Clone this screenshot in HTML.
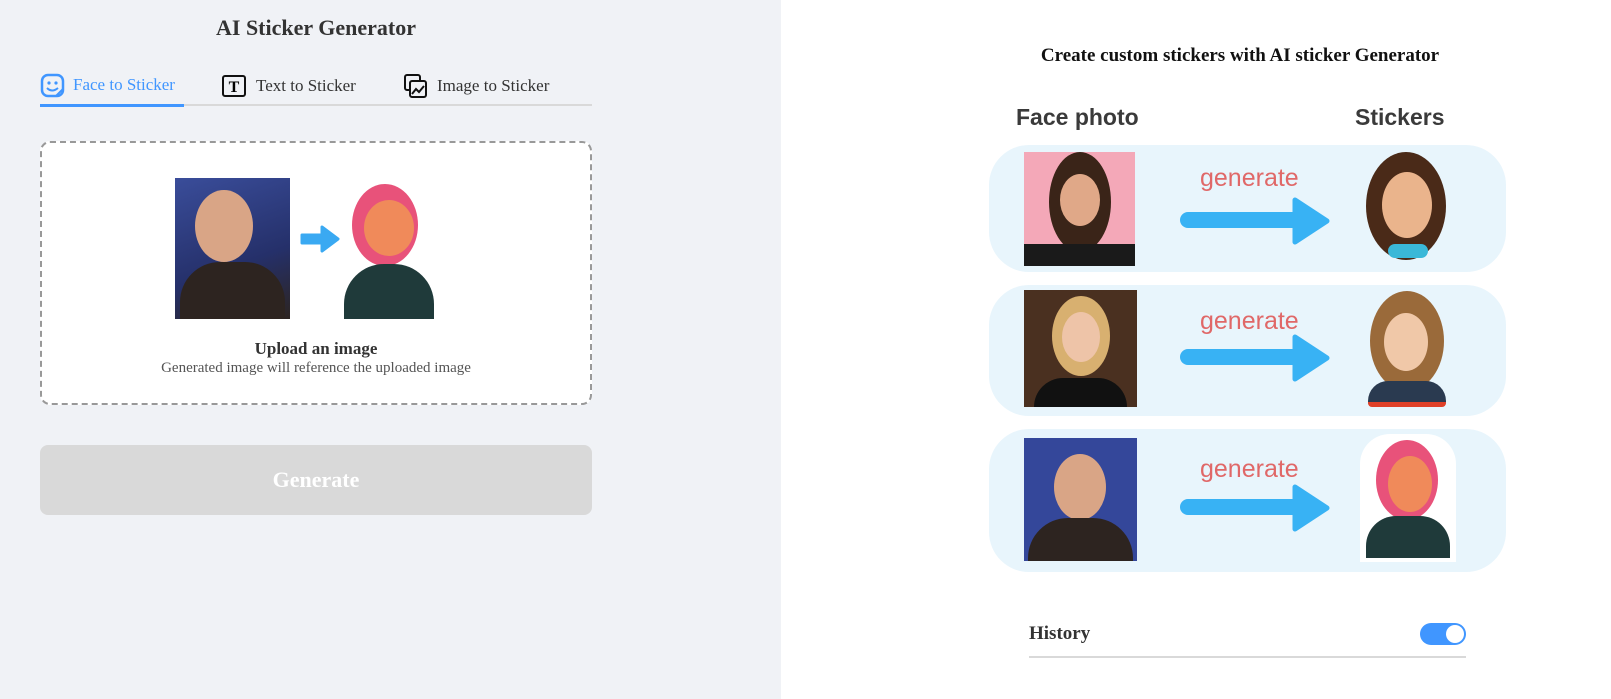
<!DOCTYPE html><html><head><meta charset="utf-8"><style>
*{margin:0;padding:0;box-sizing:border-box}
body{width:1611px;height:699px;position:relative;background:#fff;font-family:"Liberation Serif",serif;overflow:hidden}
.a{position:absolute}
.row{position:absolute;left:989px;width:517px;background:#e8f5fc;border-radius:40px}
.gen{position:absolute;left:1200px;font-family:"Liberation Sans",sans-serif;font-size:25px;color:#e06868}
.photo{position:absolute;left:1024px;overflow:hidden}
.face{position:absolute;border-radius:50%}
</style></head><body>
<div class="a" style="left:0;top:0;width:781px;height:699px;background:#f0f2f6"></div>
<div class="a" style="left:0;top:15px;width:632px;text-align:center;font-weight:bold;font-size:22px;color:#333">AI Sticker Generator</div>
<!-- tabs -->
<svg class="a" style="left:40px;top:73px" width="26" height="26" viewBox="0 0 26 26"><rect x="2" y="2" width="21" height="21" rx="6" fill="none" stroke="#4096ff" stroke-width="2.5"/><circle cx="9" cy="10" r="1.6" fill="#4096ff"/><circle cx="16" cy="10" r="1.6" fill="#4096ff"/><path d="M7 15q5 5 11 0" fill="none" stroke="#4096ff" stroke-width="2"/><path d="M16 23l7-7" stroke="#4096ff" stroke-width="2"/></svg>
<div class="a" style="left:73px;top:75px;font-size:17px;color:#4096ff">Face to Sticker</div>
<svg class="a" style="left:222px;top:75px" width="24" height="22"><rect x="1" y="1" width="22" height="20" rx="2" fill="none" stroke="#111" stroke-width="2"/><text x="12" y="17" text-anchor="middle" font-family="Liberation Serif" font-weight="bold" font-size="16">T</text></svg>
<div class="a" style="left:256px;top:76px;font-size:17px;color:#333">Text to Sticker</div>
<svg class="a" style="left:404px;top:74px" width="24" height="24"><rect x="1" y="1" width="15" height="15" rx="2" fill="none" stroke="#111" stroke-width="2"/><rect x="6" y="7" width="16" height="16" rx="2" fill="#f0f2f6" stroke="#111" stroke-width="2"/><path d="M8 20l4-5 3 3 5-6" fill="none" stroke="#111" stroke-width="2"/></svg>
<div class="a" style="left:437px;top:76px;font-size:17px;color:#333">Image to Sticker</div>
<div class="a" style="left:40px;top:104px;width:552px;height:2px;background:#d9d9d9"></div>
<div class="a" style="left:40px;top:104px;width:144px;height:3px;background:#4096ff"></div>
<!-- upload -->
<div class="a" style="left:40px;top:141px;width:552px;height:264px;border:2px dashed #999;border-radius:10px;background:#fff"></div>
<div class="a" style="left:175px;top:178px;width:115px;height:141px;background:linear-gradient(160deg,#3a4d9a,#25306a 60%,#2c2420)"></div>
<div class="face" style="left:195px;top:190px;width:58px;height:72px;background:#d9a586"></div>
<div class="a" style="left:180px;top:262px;width:105px;height:57px;background:#2d2420;border-radius:40px 40px 0 0"></div>
<svg class="a" style="left:300px;top:224px" width="40" height="30"><path d="M2 11h20V3l16 12-16 12v-8H2z" fill="#3aa9f2" stroke="#3aa9f2" stroke-linejoin="round" stroke-width="3"/></svg>
<div class="a" style="left:332px;top:178px;width:113px;height:141px">
<div class="face" style="left:20px;top:6px;width:66px;height:82px;background:#e8527a"></div>
<div class="face" style="left:32px;top:22px;width:50px;height:56px;background:#f08a5a"></div>
<div class="a" style="left:12px;top:86px;width:90px;height:55px;background:#1f3a3a;border-radius:40px 40px 0 0"></div></div>
<div class="a" style="left:40px;top:339px;width:552px;text-align:center;font-weight:bold;font-size:17px;color:#333">Upload an image</div>
<div class="a" style="left:40px;top:360px;width:552px;text-align:center;font-size:15px;color:#555">Generated image will reference the uploaded image</div>
<div class="a" style="left:40px;top:445px;width:552px;height:70px;background:#d9d9d9;border-radius:8px;color:#fff;font-weight:bold;font-size:22px;text-align:center;line-height:70px">Generate</div>
<!-- right -->
<div class="a" style="left:990px;top:45px;width:500px;text-align:center;font-weight:bold;font-size:19px;color:#111">Create custom stickers with AI sticker Generator</div>
<div class="a" style="left:1016px;top:104px;font-family:'Liberation Sans',sans-serif;font-weight:bold;font-size:23px;color:#3a3a3a">Face photo</div>
<div class="a" style="left:1355px;top:104px;font-family:'Liberation Sans',sans-serif;font-weight:bold;font-size:23px;color:#3a3a3a">Stickers</div>
<div class="row" style="top:145px;height:127px"></div>
<div class="row" style="top:285px;height:131px"></div>
<div class="row" style="top:429px;height:143px"></div>
<div class="photo" style="top:152px;width:111px;height:114px;background:#f4a8b8"><div class="face" style="left:25px;top:0;width:62px;height:100px;background:#3a2418"></div><div class="face" style="left:36px;top:22px;width:40px;height:52px;background:#e0a888"></div><div class="a" style="left:0;top:92px;width:111px;height:22px;background:#1a1a1a"></div></div>
<div class="photo" style="top:290px;width:113px;height:117px;background:#4a3020"><div class="face" style="left:28px;top:6px;width:58px;height:80px;background:#d8b070"></div><div class="face" style="left:38px;top:22px;width:38px;height:50px;background:#eec4a8"></div><div class="a" style="left:10px;top:88px;width:93px;height:29px;background:#111;border-radius:30px 30px 0 0"></div></div>
<div class="photo" style="top:438px;width:113px;height:123px;background:#34479a"><div class="face" style="left:30px;top:16px;width:52px;height:66px;background:#d9a586"></div><div class="a" style="left:4px;top:80px;width:105px;height:43px;background:#2d2420;border-radius:40px 40px 0 0"></div></div>
<div class="gen" style="top:164px">generate</div>
<div class="gen" style="top:307px">generate</div>
<div class="gen" style="top:455px">generate</div>
<svg class="a" style="left:1178px;top:196px" width="154" height="50"><path d="M10 24h108" stroke="#38b2f4" stroke-width="16" stroke-linecap="round"/><path d="M117 4l32 21-32 21z" fill="#38b2f4" stroke="#38b2f4" stroke-width="5" stroke-linejoin="round"/></svg>
<svg class="a" style="left:1178px;top:333px" width="154" height="50"><path d="M10 24h108" stroke="#38b2f4" stroke-width="16" stroke-linecap="round"/><path d="M117 4l32 21-32 21z" fill="#38b2f4" stroke="#38b2f4" stroke-width="5" stroke-linejoin="round"/></svg>
<svg class="a" style="left:1178px;top:483px" width="154" height="50"><path d="M10 24h108" stroke="#38b2f4" stroke-width="16" stroke-linecap="round"/><path d="M117 4l32 21-32 21z" fill="#38b2f4" stroke="#38b2f4" stroke-width="5" stroke-linejoin="round"/></svg>
<div class="a" style="left:1366px;top:152px;width:80px;height:110px"><div class="face" style="left:0;top:0;width:80px;height:108px;background:#4a2a18"></div><div class="face" style="left:16px;top:20px;width:50px;height:66px;background:#eab48c"></div><div class="a" style="left:22px;top:92px;width:40px;height:14px;background:#3ab8d8;border-radius:8px"></div></div>
<div class="a" style="left:1366px;top:291px;width:82px;height:120px"><div class="face" style="left:4px;top:0;width:74px;height:100px;background:#9a6a3a"></div><div class="face" style="left:18px;top:22px;width:44px;height:58px;background:#f0c8a8"></div><div class="a" style="left:2px;top:90px;width:78px;height:26px;background:#2a3a50;border-radius:20px 20px 4px 4px;border-bottom:5px solid #e04028"></div></div>
<div class="a" style="left:1360px;top:434px;width:96px;height:128px;background:#fff;border-radius:30px 30px 0 0"><div class="face" style="left:16px;top:6px;width:62px;height:80px;background:#e8527a"></div><div class="face" style="left:28px;top:22px;width:44px;height:56px;background:#f08a5a"></div><div class="a" style="left:6px;top:82px;width:84px;height:42px;background:#1f3a3a;border-radius:30px 30px 0 0"></div></div>
<div class="a" style="left:1029px;top:623px;font-weight:bold;font-size:19px;color:#333">History</div>
<div class="a" style="left:1420px;top:623px;width:46px;height:22px;border-radius:11px;background:#4096ff"><div class="a" style="left:26px;top:2px;width:18px;height:18px;border-radius:50%;background:#fff"></div></div>
<div class="a" style="left:1029px;top:656px;width:437px;height:2px;background:#d9d9d9"></div>
</body></html>
